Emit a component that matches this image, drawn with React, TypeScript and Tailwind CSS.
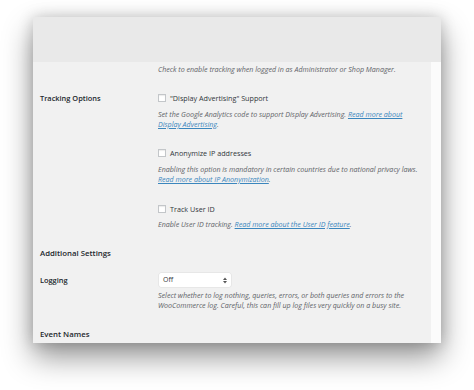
import React from 'react';

const font = { fontFamily: '"Open Sans", "Noto Sans", sans-serif' };

const Checkbox: React.FC = () => (
    <span className="inline-block w-[8px] h-[8px] bg-white border border-[#c3c6c9] shadow-[inset_0_1px_1px_rgba(0,0,0,0.08)] mr-[4px] shrink-0" />
);

const Desc: React.FC<{ children: React.ReactNode; className?: string }> = ({ children, className = '' }) => (
    <p className={`italic text-[7.1px] leading-[10px] text-[#5f6368] whitespace-nowrap ${className}`}>{children}</p>
);

const Link: React.FC<{ children: React.ReactNode }> = ({ children }) => (
    <span className="text-[#3b86bd] underline">{children}</span>
);

const App: React.FC = () => {
    return (
        <div className="w-[474px] h-[390px] bg-white overflow-hidden" style={font}>
            <div className="ml-[33px] mt-[17px] w-[408px] h-[326px] overflow-hidden bg-[#f1f1f1] shadow-[0_14px_28px_rgba(0,0,0,0.42),0_0_14px_rgba(0,0,0,0.18)] flex flex-col">
                {/* Toolbar */}
                <div className="h-[45px] bg-[#e9e9e9] shrink-0"></div>

                <div className="flex flex-1">
                    <div className="flex-1 text-[#32373c]">
                        <div className="pl-[125px] pt-[2px]">
                            <Desc>Check to enable tracking when logged in as Administrator or Shop Manager.</Desc>
                        </div>

                        {/* Tracking Options */}
                        <div className="flex mt-[18px]">
                            <div className="w-[125px] pl-[7px] font-semibold text-[7.4px] leading-[12px] text-[#23282d]">Tracking Options</div>
                            <div className="flex-1">
                                <div className="flex items-center h-[12px] text-[7.2px] text-[#32373c]">
                                    <Checkbox />
                                    "Display Advertising" Support
                                </div>
                                <Desc className="mt-[5px]">
                                    Set the Google Analytics code to support Display Advertising. <Link>Read more about</Link>
                                    <br />
                                    <Link>Display Advertising</Link>.
                                </Desc>

                                <div className="flex items-center h-[12px] mt-[18px] text-[7.2px] text-[#32373c]">
                                    <Checkbox />
                                    Anonymize IP addresses
                                </div>
                                <Desc className="mt-[5px]">
                                    Enabling this option is mandatory in certain countries due to national privacy laws.
                                    <br />
                                    <Link>Read more about IP Anonymization</Link>.
                                </Desc>

                                <div className="flex items-center h-[12px] mt-[19px] text-[7.2px] text-[#32373c]">
                                    <Checkbox />
                                    Track User ID
                                </div>
                                <Desc className="mt-[4px]">
                                    Enable User ID tracking. <Link>Read more about the User ID feature</Link>.
                                </Desc>
                            </div>
                        </div>

                        {/* Additional Settings */}
                        <div className="mt-[18px] pl-[7px] font-semibold text-[7.8px] leading-[12px] text-[#23282d]">Additional Settings</div>

                        <div className="flex mt-[14px]">
                            <div className="w-[125px] pl-[7px] font-semibold text-[7.4px] leading-[14px] text-[#23282d]">Logging</div>
                            <div className="flex-1">
                                <div className="w-[72px] h-[14px] ml-[1px] bg-white rounded-[2px] shadow-[0_0_0_0.5px_rgba(0,0,0,0.08)] flex items-center justify-between pl-[4px] pr-[4px] text-[7px] text-[#32373c]">
                                    <span>Off</span>
                                    <svg width="4" height="7" viewBox="0 0 4 7">
                                        <path d="M0 3 L2 0.5 L4 3 Z" fill="#555" />
                                        <path d="M0 4 L2 6.5 L4 4 Z" fill="#555" />
                                    </svg>
                                </div>
                                <Desc className="mt-[3px]">
                                    Select whether to log nothing, queries, errors, or both queries and errors to the
                                    <br />
                                    WooCommerce log. Careful, this can fill up log files very quickly on a busy site.
                                </Desc>
                            </div>
                        </div>

                        <div className="mt-[18px] pl-[7px] font-semibold text-[7.8px] leading-[12px] text-[#23282d]">Event Names</div>
                    </div>
                    {/* Right strip */}
                    <div className="w-[10px] bg-[#fbfbfb] shrink-0"></div>
                </div>
            </div>
        </div>
    );
};

export default App;
